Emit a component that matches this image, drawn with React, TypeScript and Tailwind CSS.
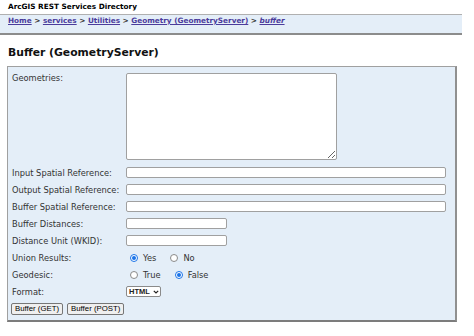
import React from "react";

const dv = { fontFamily: '"DejaVu Sans", Verdana, sans-serif' };
const ar = { fontFamily: '"Liberation Sans", Arial, sans-serif' };

function Radio({ checked }: { checked?: boolean }) {
  return checked ? (
    <span className="inline-flex w-[8px] h-[8px] rounded-full border border-[#1a73e8] bg-white items-center justify-center">
      <span className="w-[4px] h-[4px] rounded-full bg-[#1a73e8]" />
    </span>
  ) : (
    <span className="inline-block w-[8px] h-[8px] rounded-full border border-[#8a8a8a] bg-white" />
  );
}

function Row({ label, children }: { label: string; children?: React.ReactNode }) {
  return (
    <div className="flex items-center h-[17px]">
      <div className="w-[114px] text-[8.3px] leading-[10px] text-[#333]">{label}</div>
      <div className="flex items-center">{children}</div>
    </div>
  );
}

export default function App() {
  const link = "text-[#4b3c9c] underline";
  return (
    <div className="w-[474px] h-[336px] bg-white overflow-hidden" style={dv}>
      <div className="h-[14px] px-[8px] pt-[2px] text-[7.3px] leading-[9px] font-bold text-black">
        ArcGIS REST Services Directory
      </div>
      <div className="w-[462px] h-[21px] border-t border-[#b0b0b0] border-b-2 border-b-[#8c8c8c] bg-[#e4eef8] px-[8px] pt-[1px] text-[7.3px] leading-[9px] font-bold text-[#333]">
        <span className={link}>Home</span> &gt; <span className={link}>services</span> &gt;{" "}
        <span className={link}>Utilities</span> &gt; <span className={link}>Geometry (GeometryServer)</span> &gt;{" "}
        <span className={link + " italic"}>buffer</span>
      </div>
      <h2 className="mt-[11px] mb-[6px] px-[8px] text-[10.8px] leading-[14px] font-bold text-[#111]">
        Buffer (GeometryServer)
      </h2>
      <div className="ml-[7px] w-[450px] border border-[#a0a0a0] border-r-2 border-b-2 border-r-[#909090] border-b-[#7c7c7c] bg-[#e4eef8] pl-[4px] pt-[3px] pb-[3px]">
        <div className="flex h-[94px]">
          <div className="w-[114px] mt-[3px] text-[8.3px] leading-[10px] text-[#333]">Geometries:</div>
          <textarea
            readOnly
            className="mt-[3px] w-[211px] h-[87px] border border-[#a0a0a0] rounded-[2px] bg-white"
          />
        </div>
        <Row label="Input Spatial Reference:">
          <div className="w-[320px] h-[11px] border border-[#a0a0a0] rounded-[2px] bg-white" />
        </Row>
        <Row label="Output Spatial Reference:">
          <div className="w-[320px] h-[11px] border border-[#a0a0a0] rounded-[2px] bg-white" />
        </Row>
        <Row label="Buffer Spatial Reference:">
          <div className="w-[320px] h-[11px] border border-[#a0a0a0] rounded-[2px] bg-white" />
        </Row>
        <Row label="Buffer Distances:">
          <div className="w-[101px] h-[11px] border border-[#a0a0a0] rounded-[2px] bg-white" />
        </Row>
        <Row label="Distance Unit (WKID):">
          <div className="w-[101px] h-[11px] border border-[#a0a0a0] rounded-[2px] bg-white" />
        </Row>
        <Row label="Union Results:">
          <div className="flex items-center ml-[4px] text-[8.3px] leading-[10px] text-[#333]">
            <Radio checked />
            <span className="ml-[5px] mr-[14px]">Yes</span>
            <Radio />
            <span className="ml-[5px]">No</span>
          </div>
        </Row>
        <Row label="Geodesic:">
          <div className="flex items-center ml-[4px] text-[8.3px] leading-[10px] text-[#333]">
            <Radio />
            <span className="ml-[5px] mr-[14px]">True</span>
            <Radio checked />
            <span className="ml-[5px]">False</span>
          </div>
        </Row>
        <Row label="Format:">
          <div
            className="flex items-center h-[11px] w-[35px] border border-[#8a8a8a] rounded-[2px] bg-white pl-[2px] text-[7.5px] leading-[9px] font-bold text-[#222]"
            style={ar}
          >
            HTML
            <svg width="6" height="4" viewBox="0 0 6 4" className="ml-[3px]">
              <path d="M0.8 0.8 L3 3 L5.2 0.8" fill="none" stroke="#222" strokeWidth="1.2" />
            </svg>
          </div>
        </Row>
        <div className="flex items-center h-[17px] -ml-px gap-[4px]" style={ar}>
          <div className="h-[12px] px-[3px] border border-[#767676] rounded-[2px] bg-[#efefef] text-[7.8px] leading-[10px] text-black flex items-center">
            Buffer (GET)
          </div>
          <div className="h-[12px] px-[3px] border border-[#767676] rounded-[2px] bg-[#efefef] text-[7.8px] leading-[10px] text-black flex items-center">
            Buffer (POST)
          </div>
        </div>
      </div>
    </div>
  );
}
